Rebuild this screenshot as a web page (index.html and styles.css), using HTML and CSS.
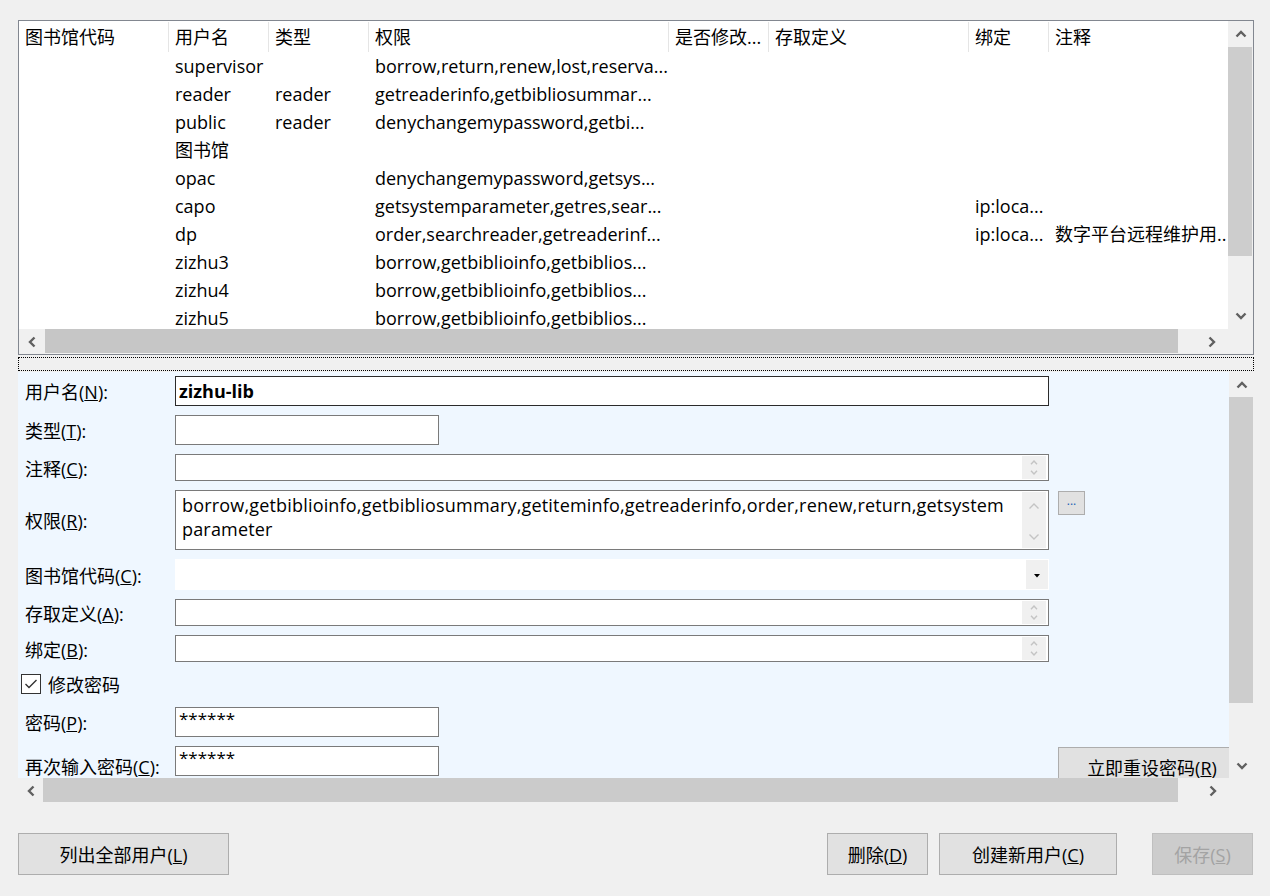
FILE: index.html
```html
<!DOCTYPE html>
<html lang="zh-CN">
<head>
<meta charset="utf-8">
<title>用户管理</title>
<link rel="stylesheet" href="styles.css">
</head>
<body>
<div class="window">
  <div class="list">
    <div class="list-body">
      <div class="lrow lhead">
        <div class="c">图书馆代码</div><div class="c">用户名</div><div class="c">类型</div><div class="c">权限</div><div class="c">是否修改...</div><div class="c">存取定义</div><div class="c">绑定</div><div class="c last">注释</div>
      </div>
      <div class="lrow"><div class="c"></div><div class="c">supervisor</div><div class="c"></div><div class="c">borrow,return,renew,lost,reserva...</div><div class="c"></div><div class="c"></div><div class="c"></div><div class="c"></div></div>
      <div class="lrow"><div class="c"></div><div class="c">reader</div><div class="c">reader</div><div class="c">getreaderinfo,getbibliosummar...</div><div class="c"></div><div class="c"></div><div class="c"></div><div class="c"></div></div>
      <div class="lrow"><div class="c"></div><div class="c">public</div><div class="c">reader</div><div class="c">denychangemypassword,getbi...</div><div class="c"></div><div class="c"></div><div class="c"></div><div class="c"></div></div>
      <div class="lrow"><div class="c"></div><div class="c">图书馆</div><div class="c"></div><div class="c"></div><div class="c"></div><div class="c"></div><div class="c"></div><div class="c"></div></div>
      <div class="lrow"><div class="c"></div><div class="c">opac</div><div class="c"></div><div class="c">denychangemypassword,getsys...</div><div class="c"></div><div class="c"></div><div class="c"></div><div class="c"></div></div>
      <div class="lrow"><div class="c"></div><div class="c">capo</div><div class="c"></div><div class="c">getsystemparameter,getres,sear...</div><div class="c"></div><div class="c"></div><div class="c">ip:loca...</div><div class="c"></div></div>
      <div class="lrow"><div class="c"></div><div class="c">dp</div><div class="c"></div><div class="c">order,searchreader,getreaderinf...</div><div class="c"></div><div class="c"></div><div class="c">ip:loca...</div><div class="c">数字平台远程维护用..</div></div>
      <div class="lrow"><div class="c"></div><div class="c">zizhu3</div><div class="c"></div><div class="c">borrow,getbiblioinfo,getbiblios...</div><div class="c"></div><div class="c"></div><div class="c"></div><div class="c"></div></div>
      <div class="lrow"><div class="c"></div><div class="c">zizhu4</div><div class="c"></div><div class="c">borrow,getbiblioinfo,getbiblios...</div><div class="c"></div><div class="c"></div><div class="c"></div><div class="c"></div></div>
      <div class="lrow"><div class="c"></div><div class="c">zizhu5</div><div class="c"></div><div class="c">borrow,getbiblioinfo,getbiblios...</div><div class="c"></div><div class="c"></div><div class="c"></div><div class="c"></div></div>
    </div>
    <div class="vscroll list-v">
      <div class="arrow"><svg width="12" height="8" viewBox="0 0 12 8"><polyline points="1.5,6.5 6,2 10.5,6.5" class="chev"/></svg></div>
      <div class="track"><div class="thumb"></div></div>
      <div class="arrow"><svg width="12" height="8" viewBox="0 0 12 8"><polyline points="1.5,1.5 6,6 10.5,1.5" class="chev"/></svg></div>
    </div>
    <div class="hscroll list-h">
      <div class="arrow"><svg width="8" height="12" viewBox="0 0 8 12"><polyline points="6.5,1.5 2,6 6.5,10.5" class="chev"/></svg></div>
      <div class="track"><div class="thumb"></div></div>
      <div class="arrow arrow-end"><svg width="8" height="12" viewBox="0 0 8 12"><polyline points="1.5,1.5 6,6 1.5,10.5" class="chev"/></svg></div>
    </div>
    <div class="corner"></div>
  </div>

  <div class="splitter"></div>

  <div class="panel">
    <div class="form">
      <div class="frow h30">
        <div class="lbl">用户名(<u>N</u>):</div>
        <div class="field"><div class="inp focus full"><span class="txt bold">zizhu-lib</span></div></div>
      </div>
      <div class="frow h30">
        <div class="lbl">类型(<u>T</u>):</div>
        <div class="field"><div class="inp short"></div></div>
      </div>
      <div class="frow h27">
        <div class="lbl">注释(<u>C</u>):</div>
        <div class="field"><div class="inp full"><span class="txt"></span>
          <div class="inbar spin">
            <svg width="8" height="5" viewBox="0 0 8 5"><polyline points="1,4.2 4,1 7,4.2" class="fchev"/></svg>
            <svg width="8" height="5" viewBox="0 0 8 5"><polyline points="1,0.8 4,4 7,0.8" class="fchev"/></svg>
          </div></div></div>
      </div>
      <div class="frow h60">
        <div class="lbl">权限(<u>R</u>):</div>
        <div class="field"><div class="inp full multi"><div class="txt lines"><div>borrow,getbiblioinfo,getbibliosummary,getiteminfo,getreaderinfo,order,renew,return,getsystem</div><div>parameter</div></div>
          <div class="inbar tall">
            <svg width="12" height="8" viewBox="0 0 12 8"><polyline points="1.5,6.5 6,2 10.5,6.5" class="fchev"/></svg>
            <svg width="12" height="8" viewBox="0 0 12 8"><polyline points="1.5,1.5 6,6 10.5,1.5" class="fchev"/></svg>
          </div></div></div>
        <div class="side"><div class="ell">...</div></div>
      </div>
      <div class="frow h31">
        <div class="lbl">图书馆代码(<u>C</u>):</div>
        <div class="field"><div class="combo"><span class="txt"></span><div class="drop"><svg width="6" height="4" viewBox="0 0 6 4"><polygon points="0,0 6,0 3,3.5" fill="#000"/></svg></div></div></div>
      </div>
      <div class="frow h27">
        <div class="lbl">存取定义(<u>A</u>):</div>
        <div class="field"><div class="inp full"><span class="txt"></span>
          <div class="inbar spin">
            <svg width="8" height="5" viewBox="0 0 8 5"><polyline points="1,4.2 4,1 7,4.2" class="fchev"/></svg>
            <svg width="8" height="5" viewBox="0 0 8 5"><polyline points="1,0.8 4,4 7,0.8" class="fchev"/></svg>
          </div></div></div>
      </div>
      <div class="frow h27">
        <div class="lbl">绑定(<u>B</u>):</div>
        <div class="field"><div class="inp full"><span class="txt"></span>
          <div class="inbar spin">
            <svg width="8" height="5" viewBox="0 0 8 5"><polyline points="1,4.2 4,1 7,4.2" class="fchev"/></svg>
            <svg width="8" height="5" viewBox="0 0 8 5"><polyline points="1,0.8 4,4 7,0.8" class="fchev"/></svg>
          </div></div></div>
      </div>
      <div class="frow h27 checkrow">
        <div class="cb"><svg width="18" height="18" viewBox="0 0 18 18"><polyline points="3.5,9 7,12.5 14.5,5" fill="none" stroke="#333" stroke-width="1.4"/></svg></div>
        <div class="cblbl">修改密码</div>
      </div>
      <div class="frow h30">
        <div class="lbl">密码(<u>P</u>):</div>
        <div class="field"><div class="inp short"><span class="txt pw">******</span></div></div>
      </div>
      <div class="frow h40">
        <div class="lbl">再次输入密码(<u>C</u>):</div>
        <div class="field top"><div class="inp short h30b"><span class="txt pw">******</span></div></div>
        <div class="side top"><div class="reset">立即重设密码(<u>R</u>)</div></div>
      </div>
    </div>
    <div class="vscroll panel-v">
      <div class="arrow"><svg width="12" height="8" viewBox="0 0 12 8"><polyline points="1.5,6.5 6,2 10.5,6.5" class="chev"/></svg></div>
      <div class="track"><div class="thumb"></div></div>
      <div class="arrow"><svg width="12" height="8" viewBox="0 0 12 8"><polyline points="1.5,1.5 6,6 10.5,1.5" class="chev"/></svg></div>
    </div>
    <div class="hscroll panel-h">
      <div class="arrow"><svg width="8" height="12" viewBox="0 0 8 12"><polyline points="6.5,1.5 2,6 6.5,10.5" class="chev"/></svg></div>
      <div class="track"><div class="thumb"></div></div>
      <div class="arrow arrow-end"><svg width="8" height="12" viewBox="0 0 8 12"><polyline points="1.5,1.5 6,6 1.5,10.5" class="chev"/></svg></div>
    </div>
    <div class="corner"></div>
  </div>

  <div class="buttons">
    <button class="btn b-list">列出全部用户(<u>L</u>)</button>
    <button class="btn b-del">删除(<u>D</u>)</button>
    <button class="btn b-new">创建新用户(<u>C</u>)</button>
    <button class="btn b-save" disabled>保存(<u>S</u>)</button>
  </div>
</div>
</body>
</html>
```
FILE: styles.css
```css
* { box-sizing: border-box; }

body {
  margin: 0;
  background: #f0f0f0;
  font-family: "Open Sans", "Noto Sans CJK SC", sans-serif;
  font-size: 18px;
  color: #000;
}

.window {
  width: 1236px;
  margin-left: 18px;
  padding-top: 20px;
}

/* ---------- list view ---------- */
.list {
  height: 335px;
  border: 1px solid #828790;
  background: #fff;
  display: grid;
  grid-template-columns: 1fr 25px;
  grid-template-rows: 1fr 25px;
}

.list-body {
  overflow: hidden;
  background: #fff;
}

.lrow {
  display: grid;
  grid-template-columns: 150px 100px 100px 300px 100px 200px 80px 1fr;
  height: 28px;
  line-height: 28px;
}

.lhead {
  height: 31px;
  line-height: 30px;
  padding-top: 1px;
}

.c {
  padding-left: 6px;
  white-space: nowrap;
  overflow: hidden;
}

.lhead .c { border-right: 1px solid #e5e5e5; }
.lhead .c.last { border-right: none; }

/* ---------- scrollbars ---------- */
.vscroll {
  background: #f0f0f0;
  display: flex;
  flex-direction: column;
}

.hscroll {
  background: #f0f0f0;
  display: flex;
}

.arrow {
  flex-shrink: 0;
  display: flex;
  align-items: center;
  justify-content: center;
}

.vscroll .arrow { height: 26px; }
.hscroll .arrow { width: 26px; }
.hscroll .arrow-end { width: 30px; justify-content: flex-start; padding-left: 10px; }

.track { flex: 1; display: flex; }
.vscroll .track { flex-direction: column; }

.thumb { background: #cdcdcd; }
.hscroll .thumb { background: #c6c6c6; }

.list-v .thumb { height: 209px; width: 24px; }
.list-h .thumb { width: 1133px; height: 24px; }
.panel-v .arrow { height: 25px; }
.panel-v .thumb { height: 306px; width: 24px; }
.panel-h .arrow:first-child { width: 25px; }
.panel-h .thumb { width: 1135px; height: 24px; }
.panel-h .thumb { background: #cbcbcb; }

.corner { background: #f0f0f0; }

.chev {
  fill: none;
  stroke: #606060;
  stroke-width: 2.4;
}

.fchev {
  fill: none;
  stroke: #c4c4c4;
  stroke-width: 1.4;
}

/* ---------- splitter ---------- */
.splitter {
  margin-top: 2px;
  height: 14px;
  border: 1px dotted #000;
}

/* ---------- edit panel ---------- */
.panel {
  margin-top: 1px;
  height: 431px;
  display: grid;
  grid-template-columns: 1fr 25px;
  grid-template-rows: 1fr 25px;
}

.form {
  background: #eff7ff;
  overflow: hidden;
  padding: 4px 0 0 7px;
  display: flex;
  flex-direction: column;
  gap: 9px;
}

.frow {
  display: flex;
  align-items: center;
  flex-shrink: 0;
}

.h27 { height: 27px; }
.h30 { height: 30px; }
.h31 { height: 31px; }
.h40 { height: 40px; }
.h60 { height: 60px; }

.lbl {
  width: 150px;
  flex-shrink: 0;
  white-space: nowrap;
}

.field {
  width: 874px;
  flex-shrink: 0;
  height: 100%;
}

.field.top { align-self: flex-start; height: auto; }

.inp {
  height: 100%;
  background: #fff;
  border: 1px solid #7a7a7a;
  display: flex;
}

.inp.focus { border-color: #2b2b2b; }
.inp.full { width: 874px; }
.inp.short { width: 264px; }
.inp.h30b { height: 30px; }

.txt {
  flex: 1;
  padding-left: 3px;
  line-height: 28px;
  white-space: nowrap;
  overflow: hidden;
}

.txt.bold { font-weight: 700; }
.txt.pw { line-height: 22px; font-size: 17px; }

.txt.lines {
  padding: 2px 0 0 6px;
  line-height: 24px;
  letter-spacing: 0.18px;
}

.inbar {
  width: 24px;
  flex-shrink: 0;
  margin: 1px 2px 1px 0;
  background: #f0f0f0;
  display: flex;
  flex-direction: column;
  align-items: center;
}

.inbar.spin { justify-content: center; gap: 5px; }
.inbar.tall { justify-content: space-between; padding: 10px 0 7px; }

.combo {
  height: 100%;
  background: #fff;
  border: 1px solid #fff;
  display: flex;
}

.drop {
  width: 22px;
  background: #f0f0f0;
  display: flex;
  align-items: center;
  justify-content: center;
  padding-top: 3px;
}

.side {
  margin-left: 9px;
  align-self: flex-start;
  flex-shrink: 0;
}

.ell {
  margin-top: 1px;
  width: 27px;
  height: 24px;
  background: #e1e1e1;
  border: 1px solid #adadad;
  font-size: 12px;
  line-height: 18px;
  text-align: center;
  color: #1a5fb4;
}

.reset {
  margin-top: 1px;
  width: 188px;
  height: 42px;
  background: #e1e1e1;
  border: 1px solid #adadad;
  line-height: 40px;
  text-align: center;
  white-space: nowrap;
}

.checkrow { padding-bottom: 2px; }

.cb {
  margin-left: -4px;
  width: 20px;
  height: 20px;
  border: 1px solid #333;
  background: #fff;
  flex-shrink: 0;
}

.cb svg { display: block; }

.cblbl { margin-left: 7px; }

/* ---------- bottom buttons ---------- */
.buttons {
  margin-top: 30px;
  display: flex;
  height: 42px;
  padding-right: 1px;
}

.btn {
  font: inherit;
  color: #000;
  height: 42px;
  background: #e1e1e1;
  border: 1px solid #adadad;
  padding: 0;
  white-space: nowrap;
}

.b-list { width: 211px; }
.b-del { width: 101px; margin-left: auto; }
.b-new { width: 178px; margin-left: 11px; }
.b-save {
  width: 101px;
  margin-left: 35px;
  background: #cccccc;
  border-color: #bfbfbf;
  color: #a3a3a3;
}
```
